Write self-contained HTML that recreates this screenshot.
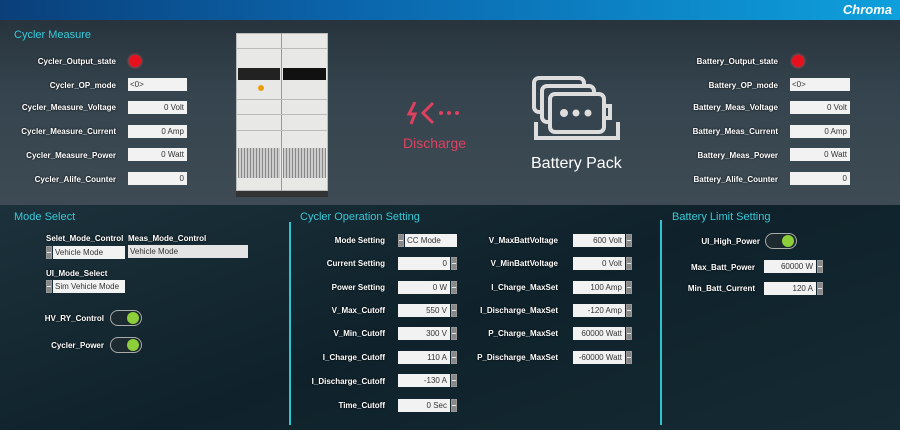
<!DOCTYPE html>
<html><head><meta charset="utf-8"><style>
*{margin:0;padding:0;box-sizing:border-box}
body{width:900px;height:430px;overflow:hidden;font-family:"Liberation Sans",sans-serif;position:relative;background:#0f2029}
.a{position:absolute}
.top{left:0;top:0;width:900px;height:20px;background:linear-gradient(90deg,#0a3f7a,#0b66ad 40%,#0ea0dc);}
.up{left:0;top:20px;width:900px;height:185px;background:linear-gradient(180deg,#27343d 0%,#35444e 40%,#3e4b54 100%)}
.low{left:0;top:205px;width:900px;height:225px;background:linear-gradient(160deg,#1c313b 0%,#0f222b 50%,#152a33 100%)}
.t{color:#37c9d8;font-size:11px}
.l{color:#fff;font-size:8px;font-weight:bold;text-align:right;white-space:nowrap;text-shadow:0 0 2px #000}
.in{background:#f2f2f2;color:#333;font-size:8px;height:13px;line-height:13px;text-align:right;padding-right:3px;white-space:nowrap}
.sp{background:#e6e6e6;width:6px;height:13px;border:1px solid #999}
.sp::before,.sp::after{content:"";position:absolute;left:0;width:4px;height:5px;background:#888}
.sp::before{top:0}.sp::after{bottom:0}
.dot{width:12px;height:12px;border-radius:50%;background:#e8101c;box-shadow:0 0 3px #f55}
.tg{width:32px;height:16px;border-radius:8px;border:1px solid #aaa;background:#1d2a30}
.tg::after{content:"";position:absolute;right:2px;top:1px;width:12px;height:12px;border-radius:50%;background:#8ccf3a}
.sep{width:2px;background:#2fc3cf}
</style></head><body>
<div class="a top"></div>
<div class="a" style="right:8px;top:2px;color:#fff;font-weight:bold;font-style:italic;font-size:13px">Chroma</div>
<div class="a up"></div>
<div class="a low"></div>

<div class="a t" style="left:14px;top:29px">Cycler Measure</div>
<div class="a l" style="right:784px;top:57px">Cycler_Output_state</div>
<div class="a dot" style="left:129px;top:55px"></div>
<div class="a l" style="right:784px;top:81px">Cycler_OP_mode</div>
<div class="a in" style="left:128px;top:78px;width:59px;text-align:left;padding-left:2px">&lt;0&gt;</div>
<div class="a l" style="right:784px;top:103px">Cycler_Measure_Voltage</div>
<div class="a in" style="left:128px;top:101px;width:59px">0 Volt</div>
<div class="a l" style="right:784px;top:127px">Cycler_Measure_Current</div>
<div class="a in" style="left:128px;top:125px;width:59px">0 Amp</div>
<div class="a l" style="right:784px;top:151px">Cycler_Measure_Power</div>
<div class="a in" style="left:128px;top:148px;width:59px">0 Watt</div>
<div class="a l" style="right:784px;top:175px">Cycler_Alife_Counter</div>
<div class="a in" style="left:128px;top:172px;width:59px">0</div>

<!-- cabinet -->
<div class="a" style="left:236px;top:33px;width:92px;height:158px;background:#e8e8e6;border:1px solid #bbb"></div>
<div class="a" style="left:281px;top:33px;width:1px;height:158px;background:#999"></div>
<div class="a" style="left:236px;top:48px;width:92px;height:1px;background:#bbb"></div>
<div class="a" style="left:236px;top:99px;width:92px;height:1px;background:#bbb"></div>
<div class="a" style="left:236px;top:114px;width:92px;height:1px;background:#bbb"></div>
<div class="a" style="left:236px;top:130px;width:92px;height:1px;background:#bbb"></div>
<div class="a" style="left:238px;top:68px;width:42px;height:12px;background:#222"></div>
<div class="a" style="left:283px;top:68px;width:43px;height:12px;background:#111"></div>
<div class="a" style="left:238px;top:148px;width:42px;height:30px;background:repeating-linear-gradient(90deg,#888 0 1px,#ccc 1px 3px)"></div>
<div class="a" style="left:283px;top:148px;width:43px;height:30px;background:repeating-linear-gradient(90deg,#888 0 1px,#ccc 1px 3px)"></div>
<div class="a" style="left:258px;top:85px;width:6px;height:6px;border-radius:50%;background:#e8a010"></div>
<div class="a" style="left:236px;top:191px;width:92px;height:6px;background:#333"></div>

<!-- discharge -->
<svg class="a" style="left:405px;top:98px" width="65" height="30" viewBox="0 0 65 30">
<path d="M10 4 L4 16 L10 16 L6 26" stroke="#e04060" stroke-width="3" fill="none"/>
<path d="M28 5 L18 15 L28 25" stroke="#e04060" stroke-width="3" fill="none"/>
<circle cx="36" cy="15" r="2" fill="#e04060"/><circle cx="44" cy="15" r="2" fill="#e04060"/><circle cx="52" cy="15" r="2" fill="#e04060"/>
</svg>
<div class="a" style="left:403px;top:135px;color:#e04060;font-size:14px">Discharge</div>

<!-- battery -->
<svg class="a" style="left:530px;top:72px" width="95" height="75" viewBox="0 0 95 75">
<g stroke="#ddd" stroke-width="4" fill="none">
<rect x="4" y="6" width="50" height="34" rx="5"/>
<rect x="12" y="14" width="52" height="36" rx="5" fill="#35444e"/>
<rect x="20" y="22" width="54" height="38" rx="5" fill="#35444e"/>
<path d="M74 34 h6 v12 h-6"/>
<path d="M6 50 v16 h82 v-16"/>
</g>
<circle cx="34" cy="41" r="4" fill="#ddd"/><circle cx="46" cy="41" r="3.5" fill="#ddd"/><circle cx="58" cy="41" r="3.5" fill="#ddd"/>
</svg>
<div class="a" style="left:531px;top:155px;color:#fff;font-size:16px">Battery Pack</div>

<div class="a l" style="right:122px;top:57px">Battery_Output_state</div>
<div class="a dot" style="left:792px;top:55px"></div>
<div class="a l" style="right:122px;top:81px">Battery_OP_mode</div>
<div class="a in" style="left:790px;top:78px;width:60px;text-align:left;padding-left:2px">&lt;0&gt;</div>
<div class="a l" style="right:122px;top:103px">Battery_Meas_Voltage</div>
<div class="a in" style="left:790px;top:101px;width:60px">0 Volt</div>
<div class="a l" style="right:122px;top:127px">Battery_Meas_Current</div>
<div class="a in" style="left:790px;top:125px;width:60px">0 Amp</div>
<div class="a l" style="right:122px;top:151px">Battery_Meas_Power</div>
<div class="a in" style="left:790px;top:148px;width:60px">0 Watt</div>
<div class="a l" style="right:122px;top:175px">Battery_Alife_Counter</div>
<div class="a in" style="left:790px;top:172px;width:60px">0</div>

<!-- Mode select -->
<div class="a t" style="left:14px;top:211px">Mode Select</div>
<div class="a l" style="left:46px;top:234px;text-align:left">Selet_Mode_Control</div>
<div class="a l" style="left:128px;top:234px;text-align:left">Meas_Mode_Control</div>
<div class="a sp" style="left:46px;top:246px"></div>
<div class="a in" style="left:53px;top:246px;width:72px;text-align:left;padding-left:2px">Vehicle Mode</div>
<div class="a in" style="left:128px;top:245px;width:120px;text-align:left;padding-left:2px;background:#e4e4e4">Vehicle Mode</div>
<div class="a l" style="left:46px;top:269px;text-align:left">UI_Mode_Select</div>
<div class="a sp" style="left:46px;top:280px"></div>
<div class="a in" style="left:53px;top:280px;width:72px;text-align:left;padding-left:2px">Sim Vehicle Mode</div>
<div class="a l" style="right:796px;top:314px">HV_RY_Control</div>
<div class="a tg" style="left:110px;top:310px"></div>
<div class="a l" style="right:796px;top:341px">Cycler_Power</div>
<div class="a tg" style="left:110px;top:337px"></div>

<div class="a sep" style="left:289px;top:222px;height:203px"></div>
<div class="a sep" style="left:660px;top:220px;height:205px"></div>

<!-- Cycler Operation -->
<div class="a t" style="left:300px;top:211px">Cycler Operation Setting</div>
<div class="a l" style="right:515px;top:236px">Mode Setting</div>
<div class="a sp" style="left:398px;top:234px"></div>
<div class="a in" style="left:405px;top:234px;width:52px;text-align:left;padding-left:2px">CC Mode</div>

<div class="a l" style="right:515px;top:259px">Current Setting</div>
<div class="a in" style="left:398px;top:257px;width:52px">0</div><div class="a sp" style="left:451px;top:257px"></div>
<div class="a l" style="right:515px;top:283px">Power Setting</div>
<div class="a in" style="left:398px;top:281px;width:52px">0 W</div><div class="a sp" style="left:451px;top:281px"></div>
<div class="a l" style="right:515px;top:306px">V_Max_Cutoff</div>
<div class="a in" style="left:398px;top:304px;width:52px">550 V</div><div class="a sp" style="left:451px;top:304px"></div>
<div class="a l" style="right:515px;top:329px">V_Min_Cutoff</div>
<div class="a in" style="left:398px;top:327px;width:52px">300 V</div><div class="a sp" style="left:451px;top:327px"></div>
<div class="a l" style="right:515px;top:353px">I_Charge_Cutoff</div>
<div class="a in" style="left:398px;top:351px;width:52px">110 A</div><div class="a sp" style="left:451px;top:351px"></div>
<div class="a l" style="right:515px;top:377px">I_Discharge_Cutoff</div>
<div class="a in" style="left:398px;top:374px;width:52px">-130 A</div><div class="a sp" style="left:451px;top:374px"></div>
<div class="a l" style="right:515px;top:401px">Time_Cutoff</div>
<div class="a in" style="left:398px;top:399px;width:52px">0 Sec</div><div class="a sp" style="left:451px;top:399px"></div>

<div class="a l" style="right:342px;top:236px">V_MaxBattVoltage</div>
<div class="a in" style="left:573px;top:234px;width:52px">600 Volt</div><div class="a sp" style="left:626px;top:234px"></div>
<div class="a l" style="right:342px;top:259px">V_MinBattVoltage</div>
<div class="a in" style="left:573px;top:257px;width:52px">0 Volt</div><div class="a sp" style="left:626px;top:257px"></div>
<div class="a l" style="right:342px;top:283px">I_Charge_MaxSet</div>
<div class="a in" style="left:573px;top:281px;width:52px">100 Amp</div><div class="a sp" style="left:626px;top:281px"></div>
<div class="a l" style="right:342px;top:306px">I_Discharge_MaxSet</div>
<div class="a in" style="left:573px;top:304px;width:52px">-120 Amp</div><div class="a sp" style="left:626px;top:304px"></div>
<div class="a l" style="right:342px;top:329px">P_Charge_MaxSet</div>
<div class="a in" style="left:573px;top:327px;width:52px">60000 Watt</div><div class="a sp" style="left:626px;top:327px"></div>
<div class="a l" style="right:342px;top:353px">P_Discharge_MaxSet</div>
<div class="a in" style="left:573px;top:351px;width:52px">-60000 Watt</div><div class="a sp" style="left:626px;top:351px"></div>

<!-- Battery limit -->
<div class="a t" style="left:672px;top:211px">Battery Limit Setting</div>
<div class="a l" style="right:140px;top:237px">UI_High_Power</div>
<div class="a tg" style="left:765px;top:233px"></div>
<div class="a l" style="right:145px;top:263px">Max_Batt_Power</div>
<div class="a in" style="left:764px;top:260px;width:52px">60000 W</div><div class="a sp" style="left:817px;top:260px"></div>
<div class="a l" style="right:145px;top:284px">Min_Batt_Current</div>
<div class="a in" style="left:764px;top:282px;width:52px">120 A</div><div class="a sp" style="left:817px;top:282px"></div>
</body></html>
